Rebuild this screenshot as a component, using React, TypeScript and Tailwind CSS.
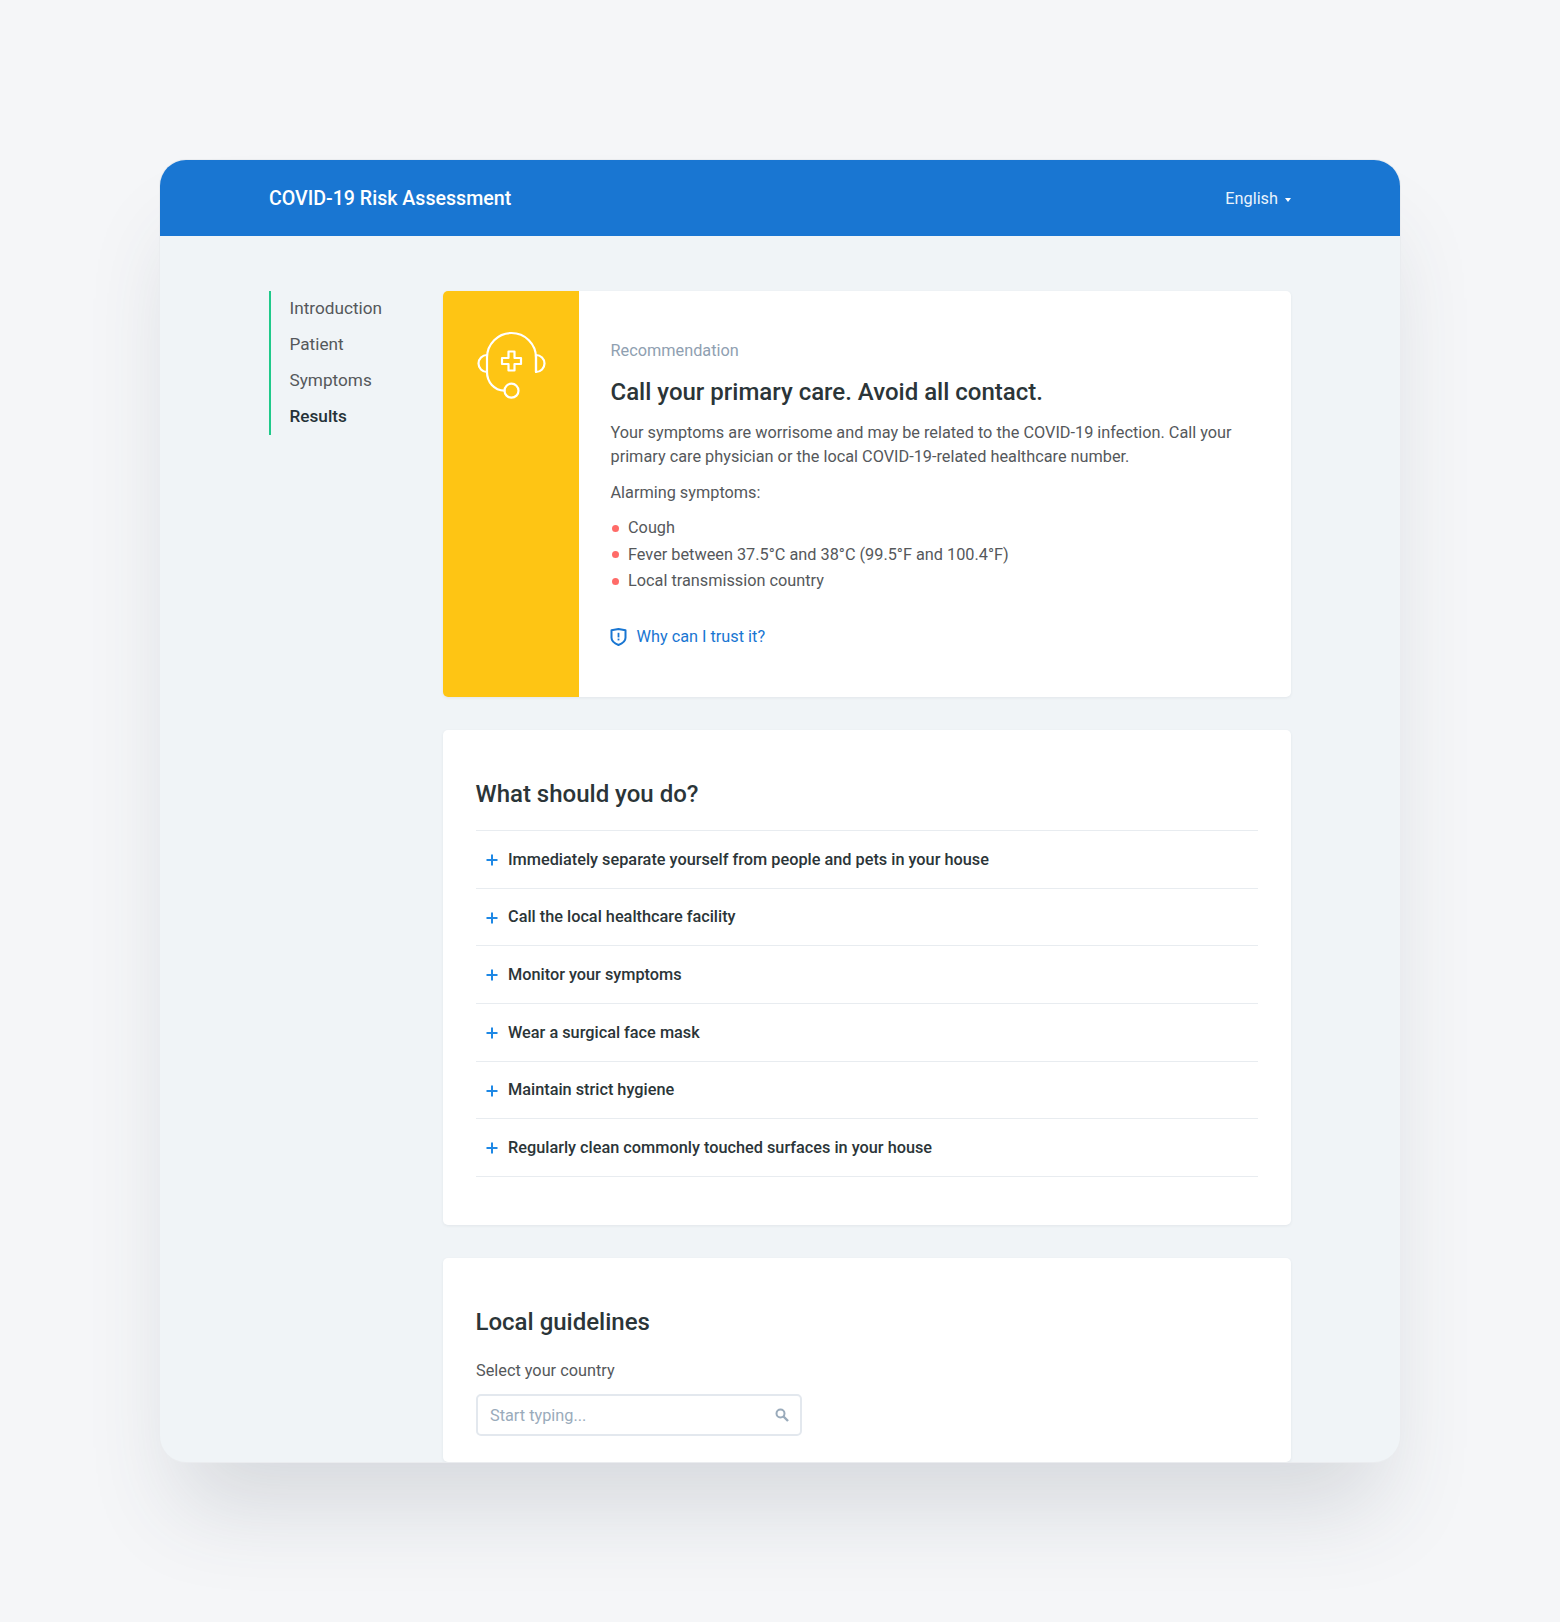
import React from "react";

const actions = [
  "Immediately separate yourself from people and pets in your house",
  "Call the local healthcare facility",
  "Monitor your symptoms",
  "Wear a surgical face mask",
  "Maintain strict hygiene",
  "Regularly clean commonly touched surfaces in your house",
];

const symptoms = [
  "Cough",
  "Fever between 37.5°C and 38°C (99.5°F and 100.4°F)",
  "Local transmission country",
];

const nav = ["Introduction", "Patient", "Symptoms"];

function AgentIcon() {
  return (
    <svg width="72" height="70" viewBox="0 0 72 70" fill="none" stroke="#fff" strokeWidth="2.2" strokeLinejoin="round" strokeLinecap="round">
      <path d="M61 42V27.5A24.5 24.5 0 0 0 12 27.5V42C12 52 19 60.2 29.5 60.7" />
      <circle cx="36.5" cy="60.7" r="7" />
      <path d="M12 25A8.5 8.5 0 0 0 12 42" />
      <path d="M61 25A8.5 8.5 0 0 1 61 42Z" />
      <path d="M33.5 21.5h6v6.5h6.5v6h-6.5v6.5h-6v-6.5h-6.5v-6h6.5z" />
    </svg>
  );
}

function ShieldIcon() {
  return (
    <svg className="-ml-[1px]" width="17" height="18" viewBox="0 0 17 18" fill="none">
      <path d="M1.5 2.2L8.5 1l7 1.2v7.6c0 3.4-3.2 5.8-7 7.2-3.8-1.4-7-3.8-7-7.2z" stroke="#1976d2" strokeWidth="2" strokeLinejoin="round" />
      <rect x="7.6" y="4.8" width="1.8" height="4.6" fill="#1976d2" />
      <rect x="7.6" y="10.6" width="1.8" height="1.8" fill="#1976d2" />
    </svg>
  );
}

export default function App() {
  return (
    <div className="min-h-[1622px] bg-[#f5f6f8] pt-[160px] pl-[160px] font-['Roboto',sans-serif] text-[16.3px] text-[#55585b]">
      <div className="flex h-[1302px] w-[1240px] flex-col overflow-hidden rounded-[26px] bg-[#f0f4f7] shadow-[0_0_0_1px_#eaecef,0_62px_90px_-20px_rgba(60,72,88,0.17)]">
        <header className="flex h-[76px] shrink-0 items-center justify-between bg-[#1976d2] px-[109px] pt-[2px] text-white">
          <div className="text-[19.6px] font-medium">COVID-19 Risk Assessment</div>
          <div className="flex items-center gap-[7px] text-[#eaf3fc]">
            <span>English</span>
            <span className="mt-[2px] h-0 w-0 border-x-[3.5px] border-t-[4px] border-x-transparent border-t-white" />
          </div>
        </header>

        <div className="flex min-h-0 flex-1 px-[109px] pt-[55px]">
          <nav className="w-[174px] shrink-0">
            <ul className="flex flex-col border-l-2 border-[#1fc98a] pl-[18.5px] text-[17.2px] leading-[34px]">
              {nav.map((n) => (
                <li key={n} className="h-[36px]">{n}</li>
              ))}
              <li className="h-[36px] font-medium text-[#263238]">Results</li>
            </ul>
          </nav>

          <main className="flex w-[848px] shrink-0 flex-col gap-[33px]">
            <section className="flex h-[406px] shrink-0 overflow-hidden rounded-[5px] bg-white shadow-[0_1px_3px_rgba(60,72,88,0.08)]">
              <div className="flex w-[136px] shrink-0 justify-center bg-[#fec514] pt-[39px]">
                <AgentIcon />
              </div>
              <div className="flex-1 pl-[31.5px] pt-[48px]">
                <div className="leading-[24px] text-[#8fa0b1]">Recommendation</div>
                <h2 className="mt-[13px] text-[24px] font-medium leading-[32px] text-[#2b3538]">
                  Call your primary care. Avoid all contact.
                </h2>
                <p className="mt-[13px] leading-[24px]">
                  Your symptoms are worrisome and may be related to the COVID-19 infection. Call your
                  <br />
                  primary care physician or the local COVID-19-related healthcare number.
                </p>
                <p className="mt-[11.5px] leading-[24px]">Alarming symptoms:</p>
                <ul className="mt-[11px] flex flex-col">
                  {symptoms.map((s) => (
                    <li key={s} className="flex h-[26.3px] items-center gap-[9px]">
                      <span className="ml-[1.5px] h-[7px] w-[7px] rounded-full bg-[#ff6b68]" />
                      <span>{s}</span>
                    </li>
                  ))}
                </ul>
                <a className="mt-[30.5px] flex items-center gap-[10px] leading-[24px] text-[#1976d2]">
                  <ShieldIcon />
                  Why can I trust it?
                </a>
              </div>
            </section>

            <section className="shrink-0 rounded-[5px] bg-white px-[33px] pb-[48px] pt-[48px] shadow-[0_1px_3px_rgba(60,72,88,0.08)]">
              <h2 className="-ml-[0.5px] text-[24px] font-medium leading-[32px] text-[#2b3538]">What should you do?</h2>
              <ul className="mt-[20px] border-t border-[#e8ecf0]">
                {actions.map((a) => (
                  <li key={a} className="flex h-[57.7px] items-center gap-[10px] border-b border-[#e8ecf0] pl-[10px] pt-[1px] font-medium text-[#2b3538]">
                    <svg width="12" height="12" viewBox="0 0 12 12" stroke="#1e88e5" strokeWidth="2">
                      <path d="M6 0.5v11M0.5 6h11" />
                    </svg>
                    {a}
                  </li>
                ))}
              </ul>
            </section>

            <section className="flex-1 rounded-[5px] bg-white px-[33px] pt-[48px] shadow-[0_1px_3px_rgba(60,72,88,0.08)]">
              <h2 className="-ml-[0.5px] text-[24px] font-medium leading-[32px] text-[#2b3538]">Local guidelines</h2>
              <label className="mt-[21px] block leading-[24px]">Select your country</label>
              <div className="mt-[11px] flex h-[42px] w-[326px] items-center justify-between rounded-[5px] border-2 border-[#e3e8ee] pl-[12px] pr-[11px] text-[#9aabbb]">
                <span className="pt-[2px]">Start typing...</span>
                <svg width="14" height="14" viewBox="0 0 14 14" fill="none" stroke="#9aabbb" strokeWidth="2">
                  <circle cx="5.5" cy="5.5" r="4" />
                  <path d="M8.5 8.5L13 13" strokeWidth="2.4" />
                </svg>
              </div>
            </section>
          </main>
        </div>
      </div>
    </div>
  );
}
